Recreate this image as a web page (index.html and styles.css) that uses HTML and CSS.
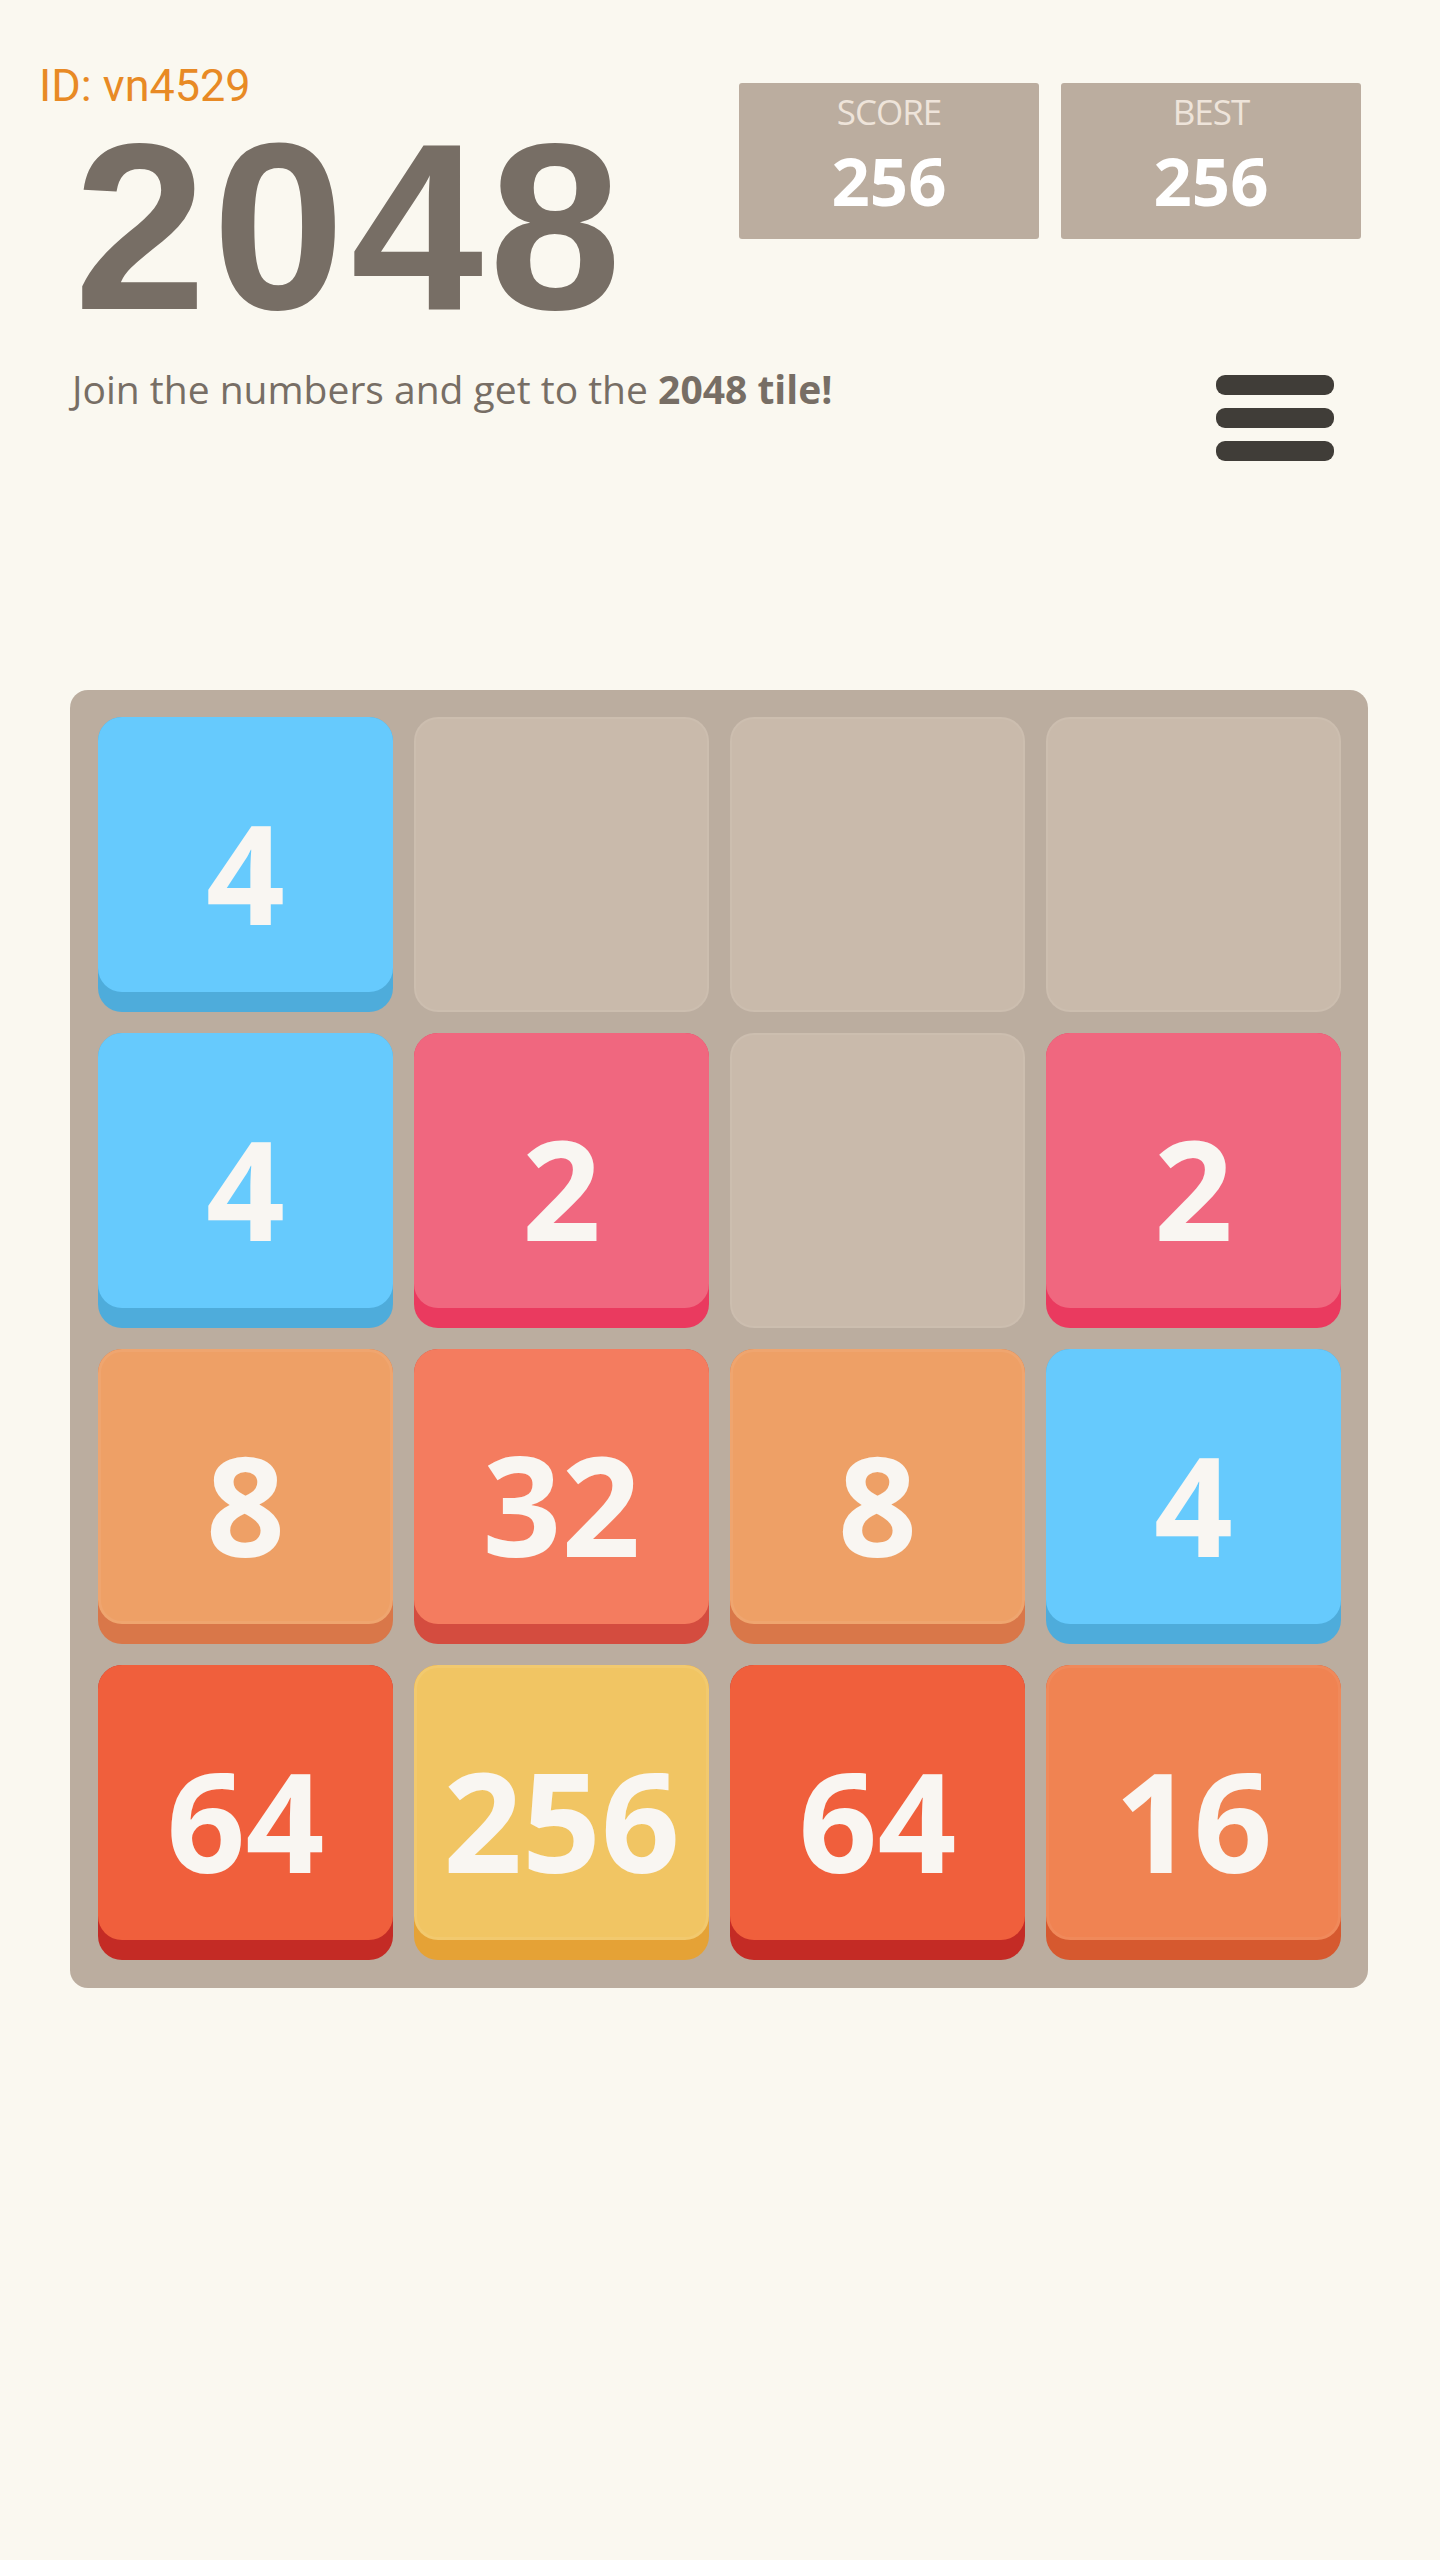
FILE: index.html
```html
<!DOCTYPE html>
<html lang="en">
<head>
<meta charset="utf-8">
<title>2048</title>
<link rel="stylesheet" href="styles.css">
</head>
<body>
<div class="user-id">ID: vn4529</div>
<div class="container">
  <div class="heading">
    <h1 class="title">2048</h1>
    <div class="scores">
      <div class="score-box">
        <div class="score-label">SCORE</div>
        <div class="score-value">256</div>
      </div>
      <div class="score-box">
        <div class="score-label">BEST</div>
        <div class="score-value">256</div>
      </div>
    </div>
  </div>
  <div class="intro-row">
    <p class="intro">Join the numbers and get to the <strong>2048 tile!</strong></p>
    <div class="menu" aria-label="Menu">
      <span class="bar"></span>
      <span class="bar"></span>
      <span class="bar"></span>
    </div>
  </div>
  <div class="board">
    <div class="tile t4"><div class="face">4</div></div>
    <div class="cell"></div>
    <div class="cell"></div>
    <div class="cell"></div>

    <div class="tile t4"><div class="face">4</div></div>
    <div class="tile t2"><div class="face">2</div></div>
    <div class="cell"></div>
    <div class="tile t2"><div class="face">2</div></div>

    <div class="tile t8"><div class="face">8</div></div>
    <div class="tile t32"><div class="face">32</div></div>
    <div class="tile t8"><div class="face">8</div></div>
    <div class="tile t4"><div class="face">4</div></div>

    <div class="tile t64"><div class="face">64</div></div>
    <div class="tile t256"><div class="face">256</div></div>
    <div class="tile t64"><div class="face">64</div></div>
    <div class="tile t16"><div class="face">16</div></div>
  </div>
</div>
</body>
</html>
```

FILE: styles.css
```css
html, body {
  margin: 0;
  padding: 0;
}
body {
  background: #faf8f0;
  font-family: "Open Sans", "Liberation Sans", sans-serif;
  color: #776e65;
  min-height: 2560px;
  position: relative;
}
.user-id {
  position: absolute;
  left: 39px;
  top: 63px;
  font-family: Roboto, "Open Sans", sans-serif;
  font-size: 45px;
  line-height: 45px;
  color: #e88a25;
}
.container {
  margin-left: 70px;
  width: 1298px;
  padding-top: 83px;
}
.heading {
  display: flex;
  justify-content: space-between;
  align-items: flex-start;
}
.title {
  margin: 25px 0 0 4px;
  font-family: "Liberation Sans", Arial, sans-serif;
  font-size: 238px;
  line-height: 238px;
  font-weight: 700;
  color: #776e65;
  letter-spacing: 6px;
}
.scores {
  display: flex;
  gap: 22px;
  margin-right: 7px;
}
.score-box {
  width: 300px;
  height: 156px;
  background: #bbad9f;
  border-radius: 3px;
  text-align: center;
  box-sizing: border-box;
  padding-top: 11px;
}
.score-label {
  font-size: 35px;
  line-height: 36px;
  color: #eee4da;
  letter-spacing: -1px;
}
.score-value {
  margin-top: 17px;
  font-size: 67px;
  line-height: 67px;
  font-weight: 700;
  color: #ffffff;
}
.intro-row {
  display: flex;
  justify-content: space-between;
  align-items: flex-start;
  margin-top: 20px;
}
.intro {
  margin: 0 0 0 2px;
  font-size: 39px;
  line-height: 1.2;
  color: #776e65;
}
.intro strong {
  font-weight: 700;
}
.menu {
  margin-top: 9px;
  margin-right: 34px;
  width: 118px;
  display: flex;
  flex-direction: column;
  gap: 13px;
}
.bar {
  display: block;
  height: 20px;
  border-radius: 9px;
  background: #403d38;
}
.board {
  margin-top: 229px;
  width: 1298px;
  height: 1298px;
  box-sizing: border-box;
  padding: 27px 27px 28px 28px;
  background: #bbad9f;
  border-radius: 18px;
  display: grid;
  grid-template-columns: repeat(4, 295px);
  grid-template-rows: repeat(4, 295px);
  gap: 21px;
}
.cell {
  background: #c9baab;
  border-radius: 24px;
  box-shadow: inset 0 0 0 2px rgba(255, 255, 255, 0.06);
}
.tile {
  border-radius: 24px;
  height: 295px;
}
.face {
  height: 275px;
  box-sizing: border-box;
  padding-top: 32px;
  border-radius: 24px;
  display: flex;
  align-items: center;
  justify-content: center;
  font-size: 138px;
  line-height: 1;
  font-weight: 700;
  color: #f9f6f2;
}
.t2 { background: #ea3a5f; }
.t2 .face { background: #f0677f; }
.t4 { background: #4eacdb; }
.t4 .face { background: #66cafd; }
.t8 { background: #d97749; }
.t8 .face { background: #eea066; box-shadow: inset 0 0 0 3px rgba(255, 255, 255, 0.06); }
.t16 { background: #d6592f; }
.t16 .face { background: #f08352; box-shadow: inset 0 0 0 3px rgba(255, 255, 255, 0.05); }
.t32 { background: #d44c3f; }
.t32 .face { background: #f47c5f; }
.t64 { background: #c42b25; }
.t64 .face { background: #f05f3c; }
.t256 { background: #e5a236; }
.t256 .face { background: #f1c563; box-shadow: inset 0 0 0 3px rgba(255, 255, 255, 0.07); }
```
